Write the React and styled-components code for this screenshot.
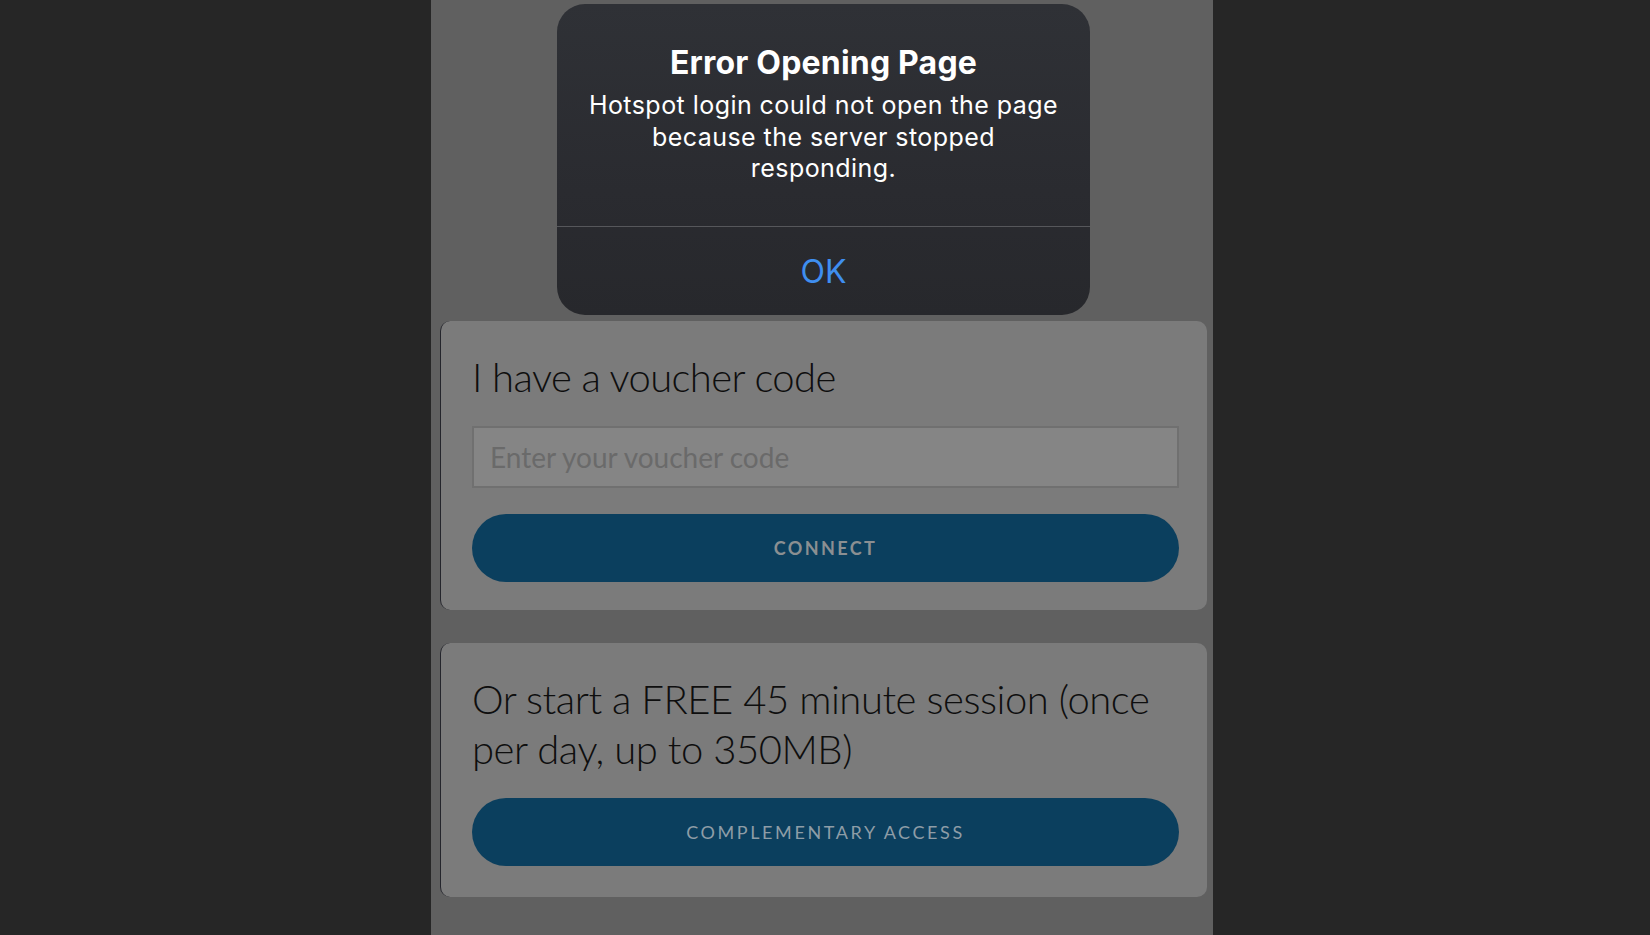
import React from 'react';
import styled, { createGlobalStyle } from 'styled-components';

const GlobalStyle = createGlobalStyle`
  html, body {
    margin: 0;
    padding: 0;
    background: #262626;
  }
  #root {
    min-height: 935px;
  }
`;

const Screen = styled.div`
  display: grid;
  grid-template-columns: 431px 782px 1fr;
  height: 935px;
  overflow: hidden;
  background: #262626;
`;

const Phone = styled.div`
  grid-column: 2;
  position: relative;
  background: #606060;
  padding: 321px 6px 0 9px;
  display: flex;
  flex-direction: column;
  gap: 33px;
`;

const Card = styled.section`
  background: #7b7b7b;
  border-radius: 10px;
  border-left: 1.5px solid #24252c;
  padding: ${p => p.$pad};
  display: flex;
  flex-direction: column;
`;

const Heading = styled.h2`
  margin: 0;
  font-family: Lato, "Open Sans", sans-serif;
  font-weight: 300;
  font-size: 40px;
  line-height: ${p => p.$lh || '48px'};
  color: #0e0e0e;
  letter-spacing: ${p => p.$ls || '-0.6px'};
`;

const VoucherInput = styled.input`
  margin-top: 25px;
  height: 62px;
  box-sizing: border-box;
  width: 100%;
  background: #858585;
  border: 2px solid #707070;
  padding: 0 16px;
  font-family: Lato, "Open Sans", sans-serif;
  font-size: 28px;
  color: #1a1a1a;
  outline: none;
  &::placeholder {
    color: #6a6a6a;
  }
`;

const PillButton = styled.button`
  margin-top: ${p => p.$top};
  height: 68px;
  width: 100%;
  border: none;
  border-radius: 34px;
  background: #0b3f5e;
  color: ${p => p.$color};
  font-family: Lato, "Open Sans", sans-serif;
  font-size: 18px;
  font-weight: ${p => p.$weight};
  letter-spacing: ${p => p.$spacing};
  text-transform: uppercase;
  cursor: pointer;
`;

const Alert = styled.div`
  position: absolute;
  top: 4px;
  left: 126px;
  width: 533px;
  height: 311px;
  border-radius: 28px;
  background: linear-gradient(180deg, #2f3136 0%, #2a2b30 60%, #27282c 100%);
  display: flex;
  flex-direction: column;
  overflow: hidden;
  font-family: Inter, "Noto Sans", sans-serif;
  color: #ffffff;
  text-align: center;
`;

const AlertBody = styled.div`
  padding: 40px 10px 0;
  height: 223px;
  box-sizing: border-box;
  border-bottom: 1px solid #56575b;
`;

const AlertTitle = styled.div`
  font-size: 32px;
  font-weight: 700;
  line-height: 38px;
  letter-spacing: 0.2px;
`;

const AlertMessage = styled.div`
  margin-top: 8px;
  font-size: 25px;
  line-height: 31.5px;
  letter-spacing: 0.45px;
  & span {
    display: block;
  }
`;

const AlertAction = styled.button`
  flex: 1;
  border: none;
  background: transparent;
  color: #3f8ef0;
  font-family: Inter, "Noto Sans", sans-serif;
  font-size: 32px;
  font-weight: 400;
  cursor: pointer;
`;

export default function App() {
  return (
    <>
      <GlobalStyle />
      <Screen>
        <Phone>
          <Card $pad="32px 28px 28px 31px">
            <Heading>I have a voucher code</Heading>
            <VoucherInput placeholder="Enter your voucher code" />
            <PillButton $top="26px" $color="#8b8f92" $weight="700" $spacing="2.4px">
              Connect
            </PillButton>
          </Card>
          <Card $pad="31px 28px 31px 31px">
            <Heading $lh="50px" $ls="-0.45px">Or start a FREE 45 minute session (once per day, up to 350MB)</Heading>
            <PillButton $top="24px" $color="#8e9da7" $weight="400" $spacing="2.6px">
              Complementary Access
            </PillButton>
          </Card>
          <Alert>
            <AlertBody>
              <AlertTitle>Error Opening Page</AlertTitle>
              <AlertMessage>
                <span>Hotspot login could not open the page</span>
                <span>because the server stopped</span>
                <span>responding.</span>
              </AlertMessage>
            </AlertBody>
            <AlertAction>OK</AlertAction>
          </Alert>
        </Phone>
      </Screen>
    </>
  );
}
